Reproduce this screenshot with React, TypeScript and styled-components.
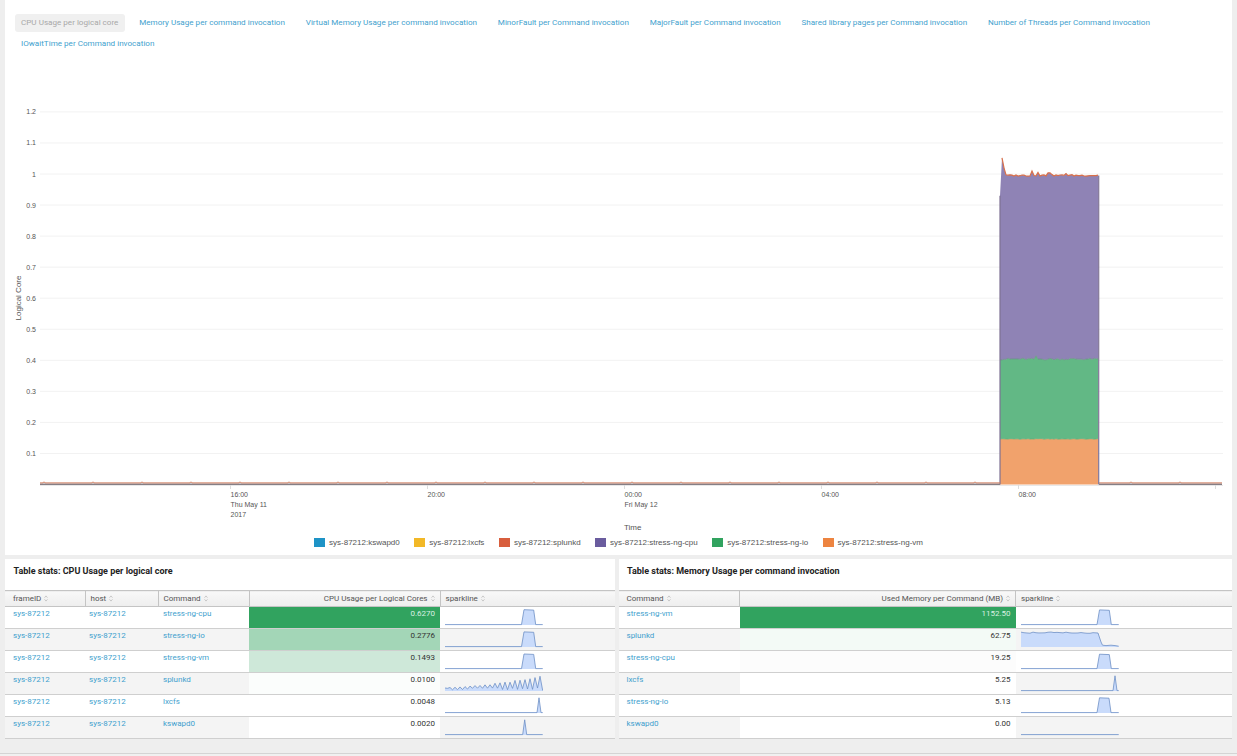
import React from "react";
import styled, { createGlobalStyle } from "styled-components";

const GlobalStyle = createGlobalStyle`
  html, body {
    margin: 0;
    padding: 0;
    height: 756px;
    overflow: hidden;
    background: #eeeeee;
    font-family: Roboto, "Liberation Sans", sans-serif;
  }
`;

const Page = styled.div`
  width: 1237px;
  height: 756px;
  display: flex;
  flex-direction: column;
`;

const Content = styled.div`
  padding: 0 5px;
  display: flex;
  flex-direction: column;
  gap: 4px;
`;

const MainPanel = styled.section`
  background: #ffffff;
  height: 555px;
  display: flex;
  flex-direction: column;
`;

const Tabs = styled.nav`
  display: flex;
  flex-wrap: wrap;
  gap: 3px 7.8px;
  padding: 14px 0 0 10px;
  height: 39px;
`;

const Tab = styled.a<{ $active?: boolean }>`
  display: block;
  height: 18px;
  line-height: 17px;
  padding: 0 7px 0 6px;
  font-size: 8.1px;
  border-radius: 3px;
  white-space: nowrap;
  color: ${(p) => (p.$active ? "#a8a8a8" : "#3f9fce")};
  background: ${(p) => (p.$active ? "#f0f0f0" : "transparent")};
`;

const ChartSvg = styled.svg`
  display: block;
  width: 1227px;
  height: 481px;
  margin-top: 3px;
  flex: none;
`;

const AxisText = styled.text<{ $large?: boolean }>`
  font-family: "Liberation Sans", sans-serif;
  font-size: ${(p) => (p.$large ? "8px" : "7px")};
  fill: #555555;
`;

const Legend = styled.div`
  display: flex;
  justify-content: center;
  gap: 14.5px;
  height: 14px;
  align-items: center;
  margin-top: -2px;
`;

const LegendItem = styled.span`
  display: flex;
  align-items: center;
  gap: 4px;
  font-family: "Liberation Sans", sans-serif;
  font-size: 8px;
  color: #555555;
  white-space: nowrap;
`;

const Swatch = styled.i<{ $color: string }>`
  display: block;
  width: 11px;
  height: 9px;
  background: ${(p) => p.$color};
`;

const TablesRow = styled.div`
  display: flex;
  gap: 4px;
  height: 180px;
`;

const TablePanel = styled.section<{ $width: number }>`
  width: ${(p) => p.$width}px;
  background: #ffffff;
  flex: none;
`;

const PanelTitle = styled.h3`
  margin: 0;
  height: 31px;
  padding: 7px 0 0 8.5px;
  box-sizing: border-box;
  font-size: 9px;
  line-height: 11px;
  font-weight: 700;
  color: #222222;
`;

const StatsTable = styled.table`
  width: 100%;
  table-layout: fixed;
  border-collapse: collapse;
  font-size: 8px;
`;

const HeadRow = styled.tr`
  height: 16px;
  background: linear-gradient(#f8f8f8, #eeeeee);
  border-top: 1px solid #c4c4c4;
  border-bottom: 1px solid #c4c4c4;
`;

const HeadCell = styled.th<{ $right?: boolean; $first?: boolean }>`
  padding: 0 5px 0 ${(p) => (p.$first ? "8px" : "5px")};
  font-weight: 400;
  color: #555555;
  text-align: ${(p) => (p.$right ? "right" : "left")};
  border-left: ${(p) => (p.$first ? "none" : "1px solid #c4c4c4")};
  white-space: nowrap;
`;

const SortIcon = styled.svg`
  width: 4px;
  height: 7px;
  margin-left: 3px;
  vertical-align: -1px;
`;

const BodyRow = styled.tr<{ $even: boolean }>`
  height: 22px;
  background: ${(p) => (p.$even ? "#f4f4f4" : "#ffffff")};
  border-bottom: 1px solid #cfcfcf;
`;

const LinkCell = styled.td<{ $pad: number }>`
  padding: 2px 0 0 ${(p) => p.$pad}px;
  vertical-align: top;
  line-height: 9px;
  color: #3f9fce;
  white-space: nowrap;
`;

const ValueCell = styled.td<{ $bg: string; $fg: string }>`
  padding: 2px 5px 0 0;
  vertical-align: top;
  line-height: 9px;
  text-align: right;
  background: ${(p) => p.$bg};
  color: ${(p) => p.$fg};
`;

const SparkCell = styled.td`
  padding: 0 0 0 5px;
  vertical-align: top;
`;

const SparkSvg = styled.svg`
  display: block;
  width: 98px;
  height: 21px;
`;

const Footer = styled.div`
  margin-top: 14px;
  border-top: 1px solid #d4d4d4;
  flex: 1;
  background: #f0f0f0;
`;

const noise = (i: number, seed: number) => {
  const v = Math.sin(i * 12.9898 + seed * 78.233) * 43758.5453;
  return v - Math.floor(v);
};

// stacked area chart, in page coordinates
const Y0 = 484.5;
const yOf = (v: number) => Y0 - v * 310.5;
const blockXs: number[] = [];
for (let x = 1000; x <= 1098.5; x += 2) blockXs.push(x);

const edge = (tops: number[], from = 0) =>
  blockXs
    .map((x, i) => `${x.toFixed(1)},${tops[i].toFixed(1)}`)
    .slice(from)
    .join(" ");

const orangeTop = blockXs.map((_, i) => yOf(0.146 + noise(i, 1) * 0.002));
const greenTop = blockXs.map((_, i) => {
  const bump = i === 18 ? 0.009 : 0;
  return yOf(0.401 + noise(i, 2) * 0.006 + bump);
});

// hand placed bumps along the top of the stack: x, height
const topBumps = [
  [1031.5, 0.014],
  [1038.5, 0.012],
  [1048, 0.01],
  [1050, 0.01],
  [1066, 0.008],
];
const purpleTop = blockXs.map((x, i) => {
  if (x <= 1000) return yOf(0.93);
  if (x <= 1002) return yOf(1.052);
  if (x <= 1004) return yOf(1.02);
  const bump = topBumps.find((b) => Math.abs(b[0] - x) <= 1);
  return yOf(0.993 + noise(i, 3) * 0.005 + (bump ? bump[1] : 0));
});

const areaBetween = (top: number[], bottom: number[] | null) => {
  const lower = bottom
    ? blockXs
        .map((x, i) => `${x.toFixed(1)},${bottom[i].toFixed(1)}`)
        .reverse()
        .join(" ")
    : `1098,${Y0} 1000,${Y0}`;
  return `${edge(top)} ${lower}`;
};

const yTicks = [0.1, 0.2, 0.3, 0.4, 0.5, 0.6, 0.7, 0.8, 0.9, 1, 1.1, 1.2];
const xTicks = [
  { x: 231, lines: ["16:00", "Thu May 11", "2017"] },
  { x: 428, lines: ["20:00"] },
  { x: 625, lines: ["00:00", "Fri May 12"] },
  { x: 822, lines: ["04:00"] },
  { x: 1019, lines: ["08:00"] },
  { x: 1216, lines: [] as string[] },
];

const bumps: number[] = [];
for (let x = 44; x < 1000; x += 49) bumps.push(x);
bumps.push(1131, 1180);

const baseline = (from: number, to: number) => {
  const pts = [`${from},482.9`];
  bumps
    .filter((b) => b > from && b < to)
    .forEach((b) => pts.push(`${b - 1},482.9`, `${b},481.8`, `${b + 1},482.9`));
  pts.push(`${to},482.9`);
  return pts.join(" ");
};

const MainChart = () => (
  <ChartSvg viewBox="5 56 1227 481">
    {yTicks.map((t) => (
      <g key={t}>
        <line x1={40} x2={1223} y1={yOf(t)} y2={yOf(t)} stroke="#f2f2f2" />
        <AxisText x={36} y={yOf(t) + 2.5} textAnchor="end">
          {t}
        </AxisText>
      </g>
    ))}
    <AxisText $large transform="translate(20.5 298) rotate(-90)" textAnchor="middle">
      Logical Core
    </AxisText>

    <line x1={40} x2={1223} y1={485.5} y2={485.5} stroke="#e8e8e8" />
    {xTicks.map((t) => (
      <g key={t.x}>
        <line x1={t.x - 0.5} x2={t.x - 0.5} y1={485} y2={489} stroke="#dddddd" />
        {t.lines.map((l, i) => (
          <AxisText key={l} x={t.x - 0.5} y={497 + i * 10}>
            {l}
          </AxisText>
        ))}
      </g>
    ))}
    <AxisText $large x={624} y={530}>
      Time
    </AxisText>

    <polygon points={areaBetween(orangeTop, null)} fill="#f1a26c" />
    <polygon points={areaBetween(greenTop, orangeTop)} fill="#62b885" />
    <polygon points={areaBetween(purpleTop, greenTop)} fill="#8f83b5" />
    <polyline points={edge(orangeTop)} fill="none" stroke="#5fb07c" strokeWidth={0.8} />
    <polyline points={edge(greenTop)} fill="none" stroke="#6f8f8a" strokeWidth={0.8} />
    <polyline points={edge(purpleTop, 1)} fill="none" stroke="#d9704a" strokeWidth={1.2} />
    <line x1={1000} x2={1000} y1={yOf(0.93)} y2={484.5} stroke="#7d7193" strokeWidth={1.2} />
    <line x1={1098.7} x2={1098.7} y1={yOf(0.995)} y2={484.5} stroke="#7d7193" strokeWidth={1.2} />

    <line x1={40} x2={1000} y1={484.2} y2={484.2} stroke="#857f86" strokeWidth={1.5} />
    <line x1={1099} x2={1222} y1={484.2} y2={484.2} stroke="#857f86" strokeWidth={1.5} />
    <polyline points={baseline(40, 1000)} fill="none" stroke="#cf7d5e" strokeWidth={1} />
    <polyline points={baseline(1099, 1222)} fill="none" stroke="#cf7d5e" strokeWidth={1} />
  </ChartSvg>
);

const legendItems = [
  { label: "sys-87212:kswapd0", color: "#1e93c6" },
  { label: "sys-87212:lxcfs", color: "#f2b827" },
  { label: "sys-87212:splunkd", color: "#d85e3d" },
  { label: "sys-87212:stress-ng-cpu", color: "#6a5c9e" },
  { label: "sys-87212:stress-ng-io", color: "#31a35f" },
  { label: "sys-87212:stress-ng-vm", color: "#ed8440" },
];

const tabs = [
  "CPU Usage per logical core",
  "Memory Usage per command invocation",
  "Virtual Memory Usage per command invocation",
  "MinorFault per Command invocation",
  "MajorFault per Command invocation",
  "Shared library pages per Command invocation",
  "Number of Threads per Command invocation",
  "IOwaitTime per Command invocation",
];

// sparkline shapes: points in a 98 x 21 box, row top at y = 0
const BASE = 17.6;
const END = 97.7;
const plateau = (rise: number, top: number, drop: number) => [
  [0, BASE],
  [rise - 1.5, BASE],
  [rise + 1, top],
  [drop - 2, top + 0.4],
  [drop, BASE],
  [END, BASE],
];
const spike = (at: number) => [
  [0, BASE],
  [at - 2, BASE],
  [at, 2.8],
  [at + 2, BASE],
  [END, BASE],
];
const jagged = () => {
  const pts: number[][] = [[0, 15]];
  for (let i = 1; i <= 38; i++) {
    const t = i / 38;
    const amp = 3 + Math.pow(t, 1.5) * 11.5 * (0.75 + noise(i, 5) * 0.25);
    pts.push([i * 2.5, i % 2 === 0 ? BASE - amp : 16.8 - noise(i, 6) * 1.8]);
  }
  pts.push([END, BASE]);
  return pts;
};
const highThenDrop = () => {
  const pts: number[][] = [];
  for (let x = 0; x <= 74; x += 3) pts.push([x, 3 + noise(x, 7) * 1.3]);
  pts.push([77, 4], [80, 13], [81.5, 16.2], [85, 16.6], [90, 16.2], [94, 16.6], [END, 17.2]);
  return pts;
};
const flat = () => [
  [0, BASE],
  [END, BASE],
];

const Sparkline = ({ points }: { points: number[][] }) => {
  const line = points.map((p) => p.join(",")).join(" ");
  return (
    <SparkSvg viewBox="0 0 98 21">
      <polygon points={`0,${BASE + 0.4} ${line} ${END},${BASE + 0.4}`} fill="#c9dbfb" />
      <polyline points={line} fill="none" stroke="#6d8fc5" strokeWidth={0.8} />
    </SparkSvg>
  );
};

const SortArrows = () => (
  <SortIcon viewBox="0 0 4 7">
    <path d="M0.5 2.7 2 0.9 3.5 2.7M0.5 4.3 2 6.1 3.5 4.3" fill="none" stroke="#b8b8b8" strokeWidth={0.7} />
  </SortIcon>
);

type Row = { links: string[]; value: string; bg: string; fg?: string; spark: number[][] };

const cpuRows: Row[] = [
  { links: ["sys-87212", "sys-87212", "stress-ng-cpu"], value: "0.6270", bg: "#31a35f", fg: "#d9f0e2", spark: plateau(78, 2.7, 90.7) },
  { links: ["sys-87212", "sys-87212", "stress-ng-io"], value: "0.2776", bg: "#a3d6b7", spark: plateau(78, 2.9, 90.7) },
  { links: ["sys-87212", "sys-87212", "stress-ng-vm"], value: "0.1493", bg: "#cee8d9", spark: plateau(78, 3, 90.7) },
  { links: ["sys-87212", "sys-87212", "splunkd"], value: "0.0100", bg: "#fbfdfc", spark: jagged() },
  { links: ["sys-87212", "sys-87212", "lxcfs"], value: "0.0048", bg: "#ffffff", spark: spike(94) },
  { links: ["sys-87212", "sys-87212", "kswapd0"], value: "0.0020", bg: "#ffffff", spark: spike(79.7) },
];

const memRows: Row[] = [
  { links: ["stress-ng-vm"], value: "1152.50", bg: "#31a35f", fg: "#d9f0e2", spark: plateau(77.5, 2.9, 90.3) },
  { links: ["splunkd"], value: "62.75", bg: "#f3faf6", spark: highThenDrop() },
  { links: ["stress-ng-cpu"], value: "19.25", bg: "#fcfcfc", spark: plateau(77.5, 3.2, 90.3) },
  { links: ["lxcfs"], value: "5.25", bg: "#ffffff", spark: spike(94) },
  { links: ["stress-ng-io"], value: "5.13", bg: "#ffffff", spark: plateau(77.5, 2.8, 90) },
  { links: ["kswapd0"], value: "0.00", bg: "#ffffff", spark: flat() },
];

type StatsProps = {
  title: string;
  width: number;
  columns: { label: string; width?: number; right?: boolean }[];
  rows: Row[];
};

const linkPad = [8, 4, 5];

const StatsPanel = ({ title, width, columns, rows }: StatsProps) => (
  <TablePanel $width={width}>
    <PanelTitle>{title}</PanelTitle>
    <StatsTable>
      <colgroup>
        {columns.map((c) => (
          <col key={c.label} width={c.width} />
        ))}
      </colgroup>
      <thead>
        <HeadRow>
          {columns.map((c, i) => (
            <HeadCell key={c.label} $right={c.right} $first={i === 0}>
              {c.label}
              <SortArrows />
            </HeadCell>
          ))}
        </HeadRow>
      </thead>
      <tbody>
        {rows.map((r, i) => (
          <BodyRow key={r.links.join() + r.value} $even={i % 2 === 1}>
            {r.links.map((l, j) => (
              <LinkCell key={j} $pad={linkPad[j]}>
                {l}
              </LinkCell>
            ))}
            <ValueCell $bg={r.bg} $fg={r.fg || "#333333"}>
              {r.value}
            </ValueCell>
            <SparkCell>
              <Sparkline points={r.spark} />
            </SparkCell>
          </BodyRow>
        ))}
      </tbody>
    </StatsTable>
  </TablePanel>
);

export default function App() {
  return (
    <Page>
      <GlobalStyle />
      <Content>
        <MainPanel>
          <Tabs>
            {tabs.map((t, i) => (
              <Tab key={t} $active={i === 0}>
                {t}
              </Tab>
            ))}
          </Tabs>
          <MainChart />
          <Legend>
            {legendItems.map((l) => (
              <LegendItem key={l.label}>
                <Swatch $color={l.color} />
                {l.label}
              </LegendItem>
            ))}
          </Legend>
        </MainPanel>
        <TablesRow>
          <StatsPanel
            title="Table stats: CPU Usage per logical core"
            width={609.5}
            columns={[
              { label: "frameID", width: 80 },
              { label: "host", width: 73 },
              { label: "Command", width: 91 },
              { label: "CPU Usage per Logical Cores", width: 191, right: true },
              { label: "sparkline" },
            ]}
            rows={cpuRows}
          />
          <StatsPanel
            title="Table stats: Memory Usage per command invocation"
            width={613.5}
            columns={[
              { label: "Command", width: 121 },
              { label: "Used Memory per Command (MB)", width: 276, right: true },
              { label: "sparkline" },
            ]}
            rows={memRows}
          />
        </TablesRow>
      </Content>
      <Footer />
    </Page>
  );
}
